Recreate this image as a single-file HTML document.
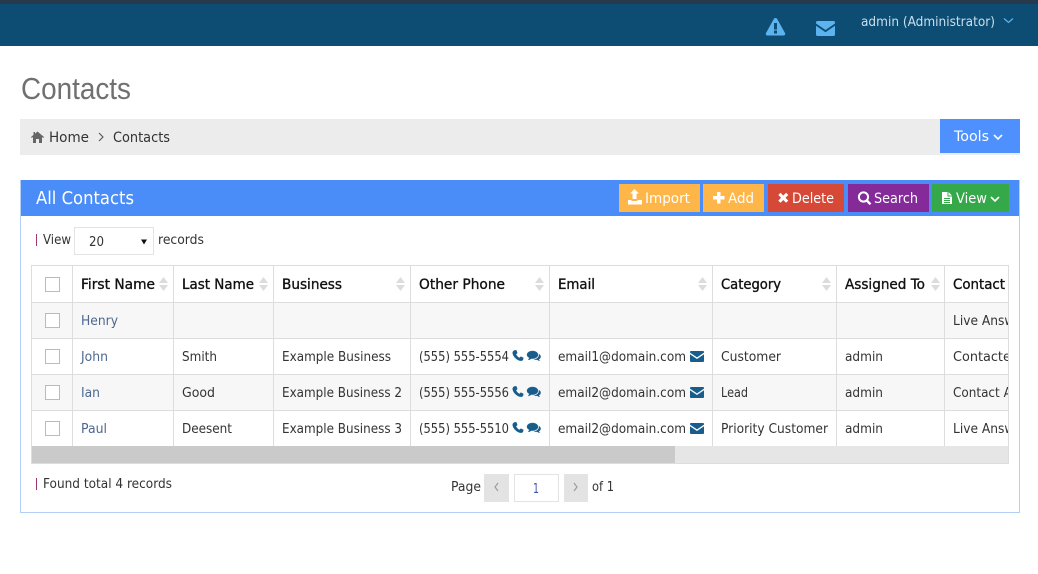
<!DOCTYPE html>
<html lang="en">
<head>
<meta charset="utf-8">
<title>Contacts</title>
<style>
html,body{margin:0;padding:0;background:#fff;width:1038px;height:574px;overflow:hidden}
svg{display:block}
text{font-family:"DejaVu Sans","Liberation Sans",sans-serif;font-size:13px;fill:#333;white-space:pre}
.h{font-size:14px;font-weight:400;fill:#111;stroke:#111;stroke-width:.35px}
.l{fill:#4d6791}
.w{fill:#fff}
.s{fill:#dcdcdc}
.b{fill:#185d8b}
.tick{fill:#a0356f}
</style>
</head>
<body>
<svg width="1038" height="574" viewBox="0 0 1038 574" xmlns="http://www.w3.org/2000/svg">
<defs>
<clipPath id="tbl"><rect x="31" y="265" width="977" height="199"/></clipPath>
<g id="sort"><path class="s" d="M4.5 0L9 6H0ZM0 8H9L4.5 14Z"/></g>
<g id="chk"><rect x=".5" y=".5" width="14" height="14" fill="#fff" stroke="#bbb"/></g>
<g id="phone"><path class="b" d="M2.4 0.3L4.3 0L5.5 3L4.2 4.2C4.8 5.8 6 7 7.6 7.7L8.8 6.4L11.5 7.8L11.2 9.6C10.8 10.6 9.6 11 8.6 10.9C4.6 10.2 1.2 6.8 0.5 3.2C0.4 1.9 1.2 0.7 2.4 0.3Z"/></g>
<g id="chat"><path class="b" stroke="#185d8b" stroke-width=".4" d="M5.5 0C8.6 0 11 1.6 11 3.8C11 6 8.6 7.6 5.5 7.6L4.3 7.5C3.4 8.3 2.4 8.7 1.2 8.9C1.8 8.2 2.2 7.5 2.3 6.8C0.9 6.1 0 5 0 3.8C0 1.6 2.5 0 5.5 0Z"/><path class="b" d="M11.9 2.9C13.1 3.6 13.8 4.6 13.8 5.7C13.8 6.8 13.1 7.7 12 8.3C12.1 8.9 12.5 9.5 13 10C11.9 9.9 11 9.5 10.2 8.9C8.8 9 7.5 8.7 6.6 8.2C9.9 8.2 12.2 6.3 11.9 2.9Z"/></g>
<g id="env"><path class="b" d="M1 0H13C13.6 0 14 .4 14 1V1.6L7 6.4L0 1.6V1C0 .4 .4 0 1 0ZM0 3.2L7 8L14 3.2V10C14 10.6 13.6 11 13 11H1C.4 11 0 10.6 0 10Z"/></g>
</defs>

<!-- top bar -->
<rect width="1038" height="46" fill="#0d4d73"/>
<rect width="1038" height="4" fill="#263a4b"/>
<path fill="#5cb3ee" d="M775.5 18C776.3 18 776.9 18.4 777.2 19L785 33C785.6 34.1 784.9 35.5 783.6 35.5H767.4C766.1 35.5 765.4 34.1 766 33L773.8 19C774.1 18.4 774.7 18 775.5 18Z"/>
<rect x="774" y="23" width="3" height="6.5" fill="#0d4d73"/>
<rect x="774" y="30.5" width="3" height="3" fill="#0d4d73"/>
<path fill="#5cb3ee" d="M817.5 21H833.5C834.4 21 835 21.6 835 22.5V23.5L825.5 30L816 23.5V22.5C816 21.6 816.6 21 817.5 21ZM816 25.8L825.5 32.3L835 25.8V34.5C835 35.4 834.4 36 833.5 36H817.5C816.6 36 816 35.4 816 34.5Z"/>
<text x="861" y="26" textLength="134" lengthAdjust="spacingAndGlyphs" style="fill:#c9dfee">admin (Administrator)</text>
<path d="M1004 18.5L1008.5 22.5L1013 18.5" fill="none" stroke="#5cb3ee" stroke-width="1.2"/>

<!-- title -->
<text x="21" y="99" textLength="110" lengthAdjust="spacingAndGlyphs" style="font-size:31px;fill:#707070;font-family:'Liberation Sans',sans-serif">Contacts</text>

<!-- breadcrumb -->
<rect x="20" y="119" width="1000" height="36" fill="#ececec"/>
<path fill="#666" d="M37.5 131.5L44 137L43.2 138L37.5 133.2L31.8 138L31 137L33.5 134.9V132H35V133.6ZM33 135.8L37.5 132L42 135.8V143H39V139H36V143H33Z"/>
<text x="49" y="142" textLength="40" lengthAdjust="spacingAndGlyphs" style="font-size:14px">Home</text>
<path d="M99 133L103 137L99 141" fill="none" stroke="#555" stroke-width="1.1"/>
<text x="113" y="142" textLength="57" lengthAdjust="spacingAndGlyphs" style="font-size:14px">Contacts</text>
<rect x="940" y="119" width="80" height="34" fill="#4d90fe"/>
<text class="w" x="954" y="141" textLength="35" lengthAdjust="spacingAndGlyphs" style="font-size:14px">Tools</text>
<path d="M994 135L998 139L1002 135" fill="none" stroke="#fff" stroke-width="1.6"/>

<!-- panel -->
<rect x="20.5" y="180.5" width="999" height="332" fill="#fff" stroke="#b3cff5"/>
<rect x="21" y="180" width="998" height="36" fill="#4a8cf8"/>
<text class="w" x="36" y="204" textLength="98" lengthAdjust="spacingAndGlyphs" style="font-size:18px">All Contacts</text>

<rect x="619" y="184" width="81" height="28" fill="#ffb648"/>
<path fill="#fff" d="M634.5 189L639 193.5H636.5V199H632.5V193.5H630ZM628 200H631.5V201H637.5V200H642V204.5H628Z"/>
<text class="w" x="645" y="203" textLength="45" lengthAdjust="spacingAndGlyphs" style="font-size:14px">Import</text>

<rect x="703" y="184" width="61" height="28" fill="#ffb648"/>
<path fill="#fff" d="M717 192H720.5V196H724.5V199.5H720.5V203.5H717V199.5H713V196H717Z"/>
<text class="w" x="728" y="203" textLength="26" lengthAdjust="spacingAndGlyphs" style="font-size:14px">Add</text>

<rect x="768" y="184" width="76" height="28" fill="#d64937"/>
<path fill="#fff" d="M780.5 192.8L783.3 195.6L786.1 192.8L788.3 195L785.5 197.8L788.3 200.6L786.1 202.8L783.3 200L780.5 202.8L778.3 200.6L781.1 197.8L778.3 195Z"/>
<text class="w" x="792" y="203" textLength="42" lengthAdjust="spacingAndGlyphs" style="font-size:14px">Delete</text>

<rect x="848" y="184" width="81" height="28" fill="#842a99"/>
<circle cx="863.5" cy="197" r="4.6" fill="none" stroke="#fff" stroke-width="2"/>
<path d="M866.8 200.5L870.5 204.3" stroke="#fff" stroke-width="2.4"/>
<text class="w" x="874" y="203" textLength="44" lengthAdjust="spacingAndGlyphs" style="font-size:14px">Search</text>

<rect x="932" y="184" width="77" height="28" fill="#35a849"/>
<path fill="#fff" d="M942 192H947.5V196.5H952V204H942ZM948.5 192L952 195.5H948.5Z"/>
<path d="M944 198.5H950M944 200.5H950M944 202.5H950" stroke="#35a849" stroke-width=".9"/>
<text class="w" x="956" y="203" textLength="31" lengthAdjust="spacingAndGlyphs" style="font-size:14px">View</text>
<path d="M991 197L995 201L999 197" fill="none" stroke="#fff" stroke-width="1.6"/>

<!-- view records -->
<rect x="36" y="234" width="1" height="12" class="tick"/>
<text x="43" y="244" textLength="28" lengthAdjust="spacingAndGlyphs">View</text>
<rect x="74.5" y="227.5" width="79" height="27" fill="#fff" stroke="#e3e3e3"/>
<text x="89" y="246" textLength="15" lengthAdjust="spacingAndGlyphs">20</text>
<path fill="#111" d="M141 239.5H147L144 244.5Z"/>
<text x="158" y="244" textLength="46" lengthAdjust="spacingAndGlyphs">records</text>

<!-- table -->
<rect x="31" y="302" width="978" height="36" fill="#f7f7f7"/>
<rect x="31" y="374" width="978" height="36" fill="#f7f7f7"/>
<g fill="#ddd">
<rect x="31" y="265" width="978" height="1"/>
<rect x="31" y="302" width="978" height="1"/>
<rect x="31" y="338" width="978" height="1"/>
<rect x="31" y="374" width="978" height="1"/>
<rect x="31" y="410" width="978" height="1"/>
<rect x="31" y="265" width="1" height="181"/>
<rect x="72" y="265" width="1" height="181"/>
<rect x="173" y="265" width="1" height="181"/>
<rect x="273" y="265" width="1" height="181"/>
<rect x="410" y="265" width="1" height="181"/>
<rect x="549" y="265" width="1" height="181"/>
<rect x="712" y="265" width="1" height="181"/>
<rect x="836" y="265" width="1" height="181"/>
<rect x="944" y="265" width="1" height="181"/>
<rect x="1008" y="265" width="1" height="181"/>
</g>

<use href="#chk" x="45" y="277"/>
<use href="#chk" x="45" y="313"/>
<use href="#chk" x="45" y="349"/>
<use href="#chk" x="45" y="385"/>
<use href="#chk" x="45" y="421"/>

<text class="h" x="81" y="289" textLength="74" lengthAdjust="spacingAndGlyphs">First Name</text>
<text class="h" x="182" y="289" textLength="72" lengthAdjust="spacingAndGlyphs">Last Name</text>
<text class="h" x="282" y="289" textLength="60" lengthAdjust="spacingAndGlyphs">Business</text>
<text class="h" x="419" y="289" textLength="86" lengthAdjust="spacingAndGlyphs">Other Phone</text>
<text class="h" x="558" y="289" textLength="37" lengthAdjust="spacingAndGlyphs">Email</text>
<text class="h" x="721" y="289" textLength="60" lengthAdjust="spacingAndGlyphs">Category</text>
<text class="h" x="845" y="289" textLength="80" lengthAdjust="spacingAndGlyphs">Assigned To</text>
<text class="h" x="953" y="289" textLength="52" lengthAdjust="spacingAndGlyphs">Contact</text>

<use href="#sort" x="159" y="277"/>
<use href="#sort" x="259" y="277"/>
<use href="#sort" x="396" y="277"/>
<use href="#sort" x="535" y="277"/>
<use href="#sort" x="698" y="277"/>
<use href="#sort" x="822" y="277"/>
<use href="#sort" x="931" y="277"/>

<g clip-path="url(#tbl)">
<text class="l" x="81" y="325" textLength="37" lengthAdjust="spacingAndGlyphs">Henry</text>
<text x="953" y="325" textLength="74" lengthAdjust="spacingAndGlyphs">Live Answer</text>

<text class="l" x="81" y="361" textLength="27" lengthAdjust="spacingAndGlyphs">John</text>
<text x="182" y="361" textLength="35" lengthAdjust="spacingAndGlyphs">Smith</text>
<text x="282" y="361" textLength="109" lengthAdjust="spacingAndGlyphs">Example Business</text>
<text x="419" y="361" textLength="90" lengthAdjust="spacingAndGlyphs">(555) 555-5554</text>
<use href="#phone" x="512" y="350"/>
<use href="#chat" x="527" y="351"/>
<text x="558" y="361" textLength="128" lengthAdjust="spacingAndGlyphs">email1@domain.com</text>
<use href="#env" x="690" y="351"/>
<text x="721" y="361" textLength="60" lengthAdjust="spacingAndGlyphs">Customer</text>
<text x="845" y="361" textLength="38" lengthAdjust="spacingAndGlyphs">admin</text>
<text x="953" y="361" textLength="66" lengthAdjust="spacingAndGlyphs">Contacted</text>

<text class="l" x="81" y="397" textLength="19" lengthAdjust="spacingAndGlyphs">Ian</text>
<text x="182" y="397" textLength="33" lengthAdjust="spacingAndGlyphs">Good</text>
<text x="282" y="397" textLength="120" lengthAdjust="spacingAndGlyphs">Example Business 2</text>
<text x="419" y="397" textLength="90" lengthAdjust="spacingAndGlyphs">(555) 555-5556</text>
<use href="#phone" x="512" y="386"/>
<use href="#chat" x="527" y="387"/>
<text x="558" y="397" textLength="128" lengthAdjust="spacingAndGlyphs">email2@domain.com</text>
<use href="#env" x="690" y="387"/>
<text x="721" y="397" textLength="27" lengthAdjust="spacingAndGlyphs">Lead</text>
<text x="845" y="397" textLength="38" lengthAdjust="spacingAndGlyphs">admin</text>
<text x="953" y="397" textLength="68" lengthAdjust="spacingAndGlyphs">Contact Att</text>

<text class="l" x="81" y="433" textLength="26" lengthAdjust="spacingAndGlyphs">Paul</text>
<text x="182" y="433" textLength="50" lengthAdjust="spacingAndGlyphs">Deesent</text>
<text x="282" y="433" textLength="120" lengthAdjust="spacingAndGlyphs">Example Business 3</text>
<text x="419" y="433" textLength="90" lengthAdjust="spacingAndGlyphs">(555) 555-5510</text>
<use href="#phone" x="512" y="422"/>
<use href="#chat" x="527" y="423"/>
<text x="558" y="433" textLength="128" lengthAdjust="spacingAndGlyphs">email2@domain.com</text>
<use href="#env" x="690" y="423"/>
<text x="721" y="433" textLength="107" lengthAdjust="spacingAndGlyphs">Priority Customer</text>
<text x="845" y="433" textLength="38" lengthAdjust="spacingAndGlyphs">admin</text>
<text x="953" y="433" textLength="74" lengthAdjust="spacingAndGlyphs">Live Answer</text>
</g>

<!-- scrollbar -->
<rect x="31" y="446" width="978" height="18" fill="#ddd"/>
<rect x="32" y="446" width="976" height="17" fill="#e6e6e6"/>
<rect x="32" y="446" width="643" height="17" fill="#cacaca"/>

<!-- footer -->
<rect x="36" y="478" width="1" height="12" class="tick"/>
<text x="43" y="488" textLength="129" lengthAdjust="spacingAndGlyphs">Found total 4 records</text>
<text x="451" y="491" textLength="30" lengthAdjust="spacingAndGlyphs">Page</text>
<rect x="484" y="474" width="25" height="28" fill="#e3e3e3"/>
<path d="M498 483L495 487L498 491" fill="none" stroke="#999" stroke-width="1.1"/>
<rect x="514.5" y="474.5" width="44" height="27" fill="#fff" stroke="#e3e3e3"/>
<text x="533" y="493" textLength="6" lengthAdjust="spacingAndGlyphs" style="fill:#3c55a5">1</text>
<rect x="564" y="474" width="24" height="28" fill="#e3e3e3"/>
<path d="M574 483L577 487L574 491" fill="none" stroke="#999" stroke-width="1.1"/>
<text x="592" y="491" textLength="22" lengthAdjust="spacingAndGlyphs">of 1</text>
</svg>
</body>
</html>
